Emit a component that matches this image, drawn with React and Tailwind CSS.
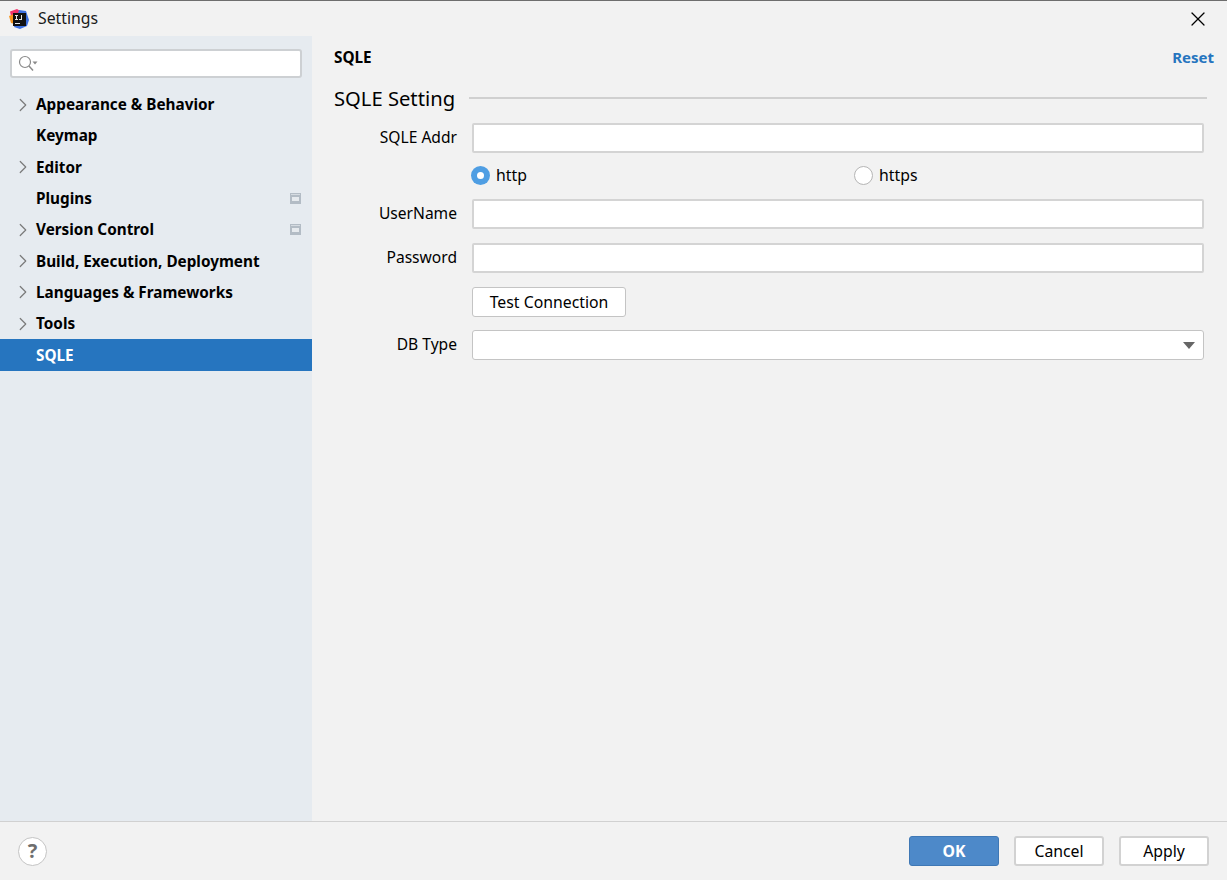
import React from 'react';
import { ChevronRight, X } from 'lucide-react';

const menu = [
  { name: 'Appearance & Behavior', arrow: true },
  { name: 'Keymap' },
  { name: 'Editor', arrow: true },
  { name: 'Plugins', badge: true },
  { name: 'Version Control', arrow: true, badge: true },
  { name: 'Build, Execution, Deployment', arrow: true },
  { name: 'Languages & Frameworks', arrow: true },
  { name: 'Tools', arrow: true },
  { name: 'SQLE', active: true },
];

function IdeaLogo() {
  return (
    <svg width="20" height="20" viewBox="0 0 20 20">
      <path d="M1 2.5 L8 0 L13 3 L10 11 L3 12 Z" fill="#f2336b" />
      <path d="M0 7 L5 5 L6 15 L2 14 Z" fill="#f7941d" />
      <path d="M10 1 L17 2 L20 11 L18 17 L11 20 L5 18 Z" fill="#3b6fe0" />
      <rect x="4" y="4" width="13" height="13" fill="#111" />
      <rect x="6" y="14" width="5" height="1" fill="#e8e8e8" />
      <rect x="6" y="6" width="3" height="1" fill="#e8e8e8" />
      <rect x="7" y="6" width="1" height="5" fill="#e8e8e8" />
      <rect x="6" y="10" width="3" height="1" fill="#e8e8e8" />
      <rect x="12" y="6" width="1" height="5" fill="#e8e8e8" />
      <rect x="10" y="10" width="3" height="1" fill="#e8e8e8" />
    </svg>
  );
}

function SearchIcon() {
  return (
    <svg width="20" height="18" viewBox="0 0 20 18" fill="none">
      <circle cx="7" cy="7" r="5.5" stroke="#8a8a8a" strokeWidth="1.2" />
      <path d="M11 11 L15 15.5" stroke="#8a8a8a" strokeWidth="1.5" />
      <path d="M14.5 6.5h5l-2.5 3z" fill="#8a8a8a" />
    </svg>
  );
}

function ProjectBadge() {
  return (
    <svg width="11" height="11" viewBox="0 0 11 11">
      <rect width="11" height="11" fill="#b3bcc5" />
      <rect x="1" y="1" width="9" height="1" fill="#d5dbe1" />
      <rect x="2" y="4" width="7" height="4" fill="#e6eaee" />
    </svg>
  );
}

function Field({ label }) {
  return (
    <div className="flex items-center h-[30px]">
      <label className="w-[138px] pr-[15px] text-right text-[15.6px]">{label}</label>
      <input className="flex-1 h-[30px] bg-white border-2 border-[#d4d4d4] rounded-[2px] outline-none" />
    </div>
  );
}

function Radio({ label, checked, className }) {
  return (
    <div className={`flex items-center gap-[6px] ${className}`}>
      {checked ? (
        <span className="w-[19px] h-[19px] rounded-full bg-[#4f9ee3] flex items-center justify-center">
          <span className="w-[7px] h-[7px] rounded-full bg-white" />
        </span>
      ) : (
        <span className="w-[19px] h-[19px] rounded-full bg-white border border-[#b5b5b5]" />
      )}
      <span className="text-[15.8px]">{label}</span>
    </div>
  );
}

function FooterButton({ children, primary }) {
  return (
    <button
      className={
        primary
          ? 'w-[90px] h-[30px] pt-[2px] rounded-[3px] bg-[#4d89c9] border border-[#3f78b5] text-white font-bold text-[15.8px]'
          : 'w-[90px] h-[30px] pt-[2px] rounded-[3px] bg-white border-2 border-[#d2d2d2] text-[15.8px]'
      }
    >
      {children}
    </button>
  );
}

export default function App() {
  return (
    <div
      className="w-[1227px] h-[880px] flex flex-col bg-[#f2f2f2] text-black border-t border-[#6e6e6e] overflow-hidden"
      style={{ fontFamily: '"Noto Sans", "Open Sans", sans-serif' }}
    >
      <header className="h-[35px] flex items-center shrink-0 pl-[9px] pr-[17px]">
        <IdeaLogo />
        <span className="ml-[9px] text-[15.8px] text-[#1a1a1a]">Settings</span>
        <X size={24} strokeWidth={1.2} className="ml-auto" />
      </header>

      <div className="flex flex-1 min-h-0">
        <aside className="w-[312px] bg-[#e6ebf0] shrink-0">
          <div className="px-[10px] pt-[13px] pb-[11px]">
            <div className="h-[29px] bg-white border-2 border-[#cdd0d3] rounded-[3px] flex items-center pl-[6px]">
              <SearchIcon />
            </div>
          </div>
          <ul>
            {menu.map((item) => (
              <li
                key={item.name}
                className={`h-[31.3px] flex items-center pr-[11px] text-[15.3px] font-bold ${
                  item.active ? 'bg-[#2675bf] text-white' : ''
                }`}
              >
                <span className="w-[36px] pl-[12px] shrink-0">
                  {item.arrow && <ChevronRight size={22} strokeWidth={1.3} className="text-[#7a7a7a]" />}
                </span>
                <span>{item.name}</span>
                {item.badge && (
                  <span className="ml-auto flex">
                    <ProjectBadge />
                  </span>
                )}
              </li>
            ))}
          </ul>
        </aside>

        <main className="flex-1 pl-[22px] pr-[13px] pt-[11px]">
          <div className="flex items-center justify-between h-[20px]">
            <span className="text-[15.3px] font-bold">SQLE</span>
            <span className="text-[15px] font-bold text-[#2675bf]">Reset</span>
          </div>

          <div className="flex items-center gap-[14px] mt-[17px] pr-[7px]">
            <span className="text-[20.2px] leading-[28px]">SQLE Setting</span>
            <span className="flex-1 h-[2px] bg-[#d0d0d0]" />
          </div>

          <div className="flex flex-col mt-[11px] mr-[10px]">
            <Field label="SQLE Addr" />
            <div className="flex items-center h-[23px] mt-[11px] pl-[137px]">
              <Radio label="http" checked className="w-[383px]" />
              <Radio label="https" />
            </div>
            <div className="mt-[12px]">
              <Field label="UserName" />
            </div>
            <div className="mt-[14px]">
              <Field label="Password" />
            </div>
            <div className="mt-[14px] pl-[138px]">
              <button className="w-[154px] h-[30px] pt-[1px] bg-white border border-[#c4c4c4] rounded-[3px] text-[15.8px]">
                Test Connection
              </button>
            </div>
            <div className="flex items-center h-[30px] mt-[13px]">
              <label className="w-[138px] pr-[15px] text-right text-[15.6px]">DB Type</label>
              <div className="flex-1 h-[30px] bg-white border border-[#c4c4c4] rounded-[3px] flex items-center justify-end pr-[8px]">
                <svg width="12" height="7" viewBox="0 0 12 7">
                  <path d="M0 0h12L6 7z" fill="#666" />
                </svg>
              </div>
            </div>
          </div>
        </main>
      </div>

      <footer className="h-[59px] shrink-0 border-t border-[#d1d1d1] flex items-center pl-[18px] pr-[18px]">
        <span className="w-[29px] h-[29px] rounded-full bg-white border border-[#c4c4c4] flex items-center justify-center text-[20px] font-bold text-[#6e6e6e]">
          ?
        </span>
        <div className="ml-auto flex gap-[15px]">
          <FooterButton primary>OK</FooterButton>
          <FooterButton>Cancel</FooterButton>
          <FooterButton>Apply</FooterButton>
        </div>
      </footer>
    </div>
  );
}
